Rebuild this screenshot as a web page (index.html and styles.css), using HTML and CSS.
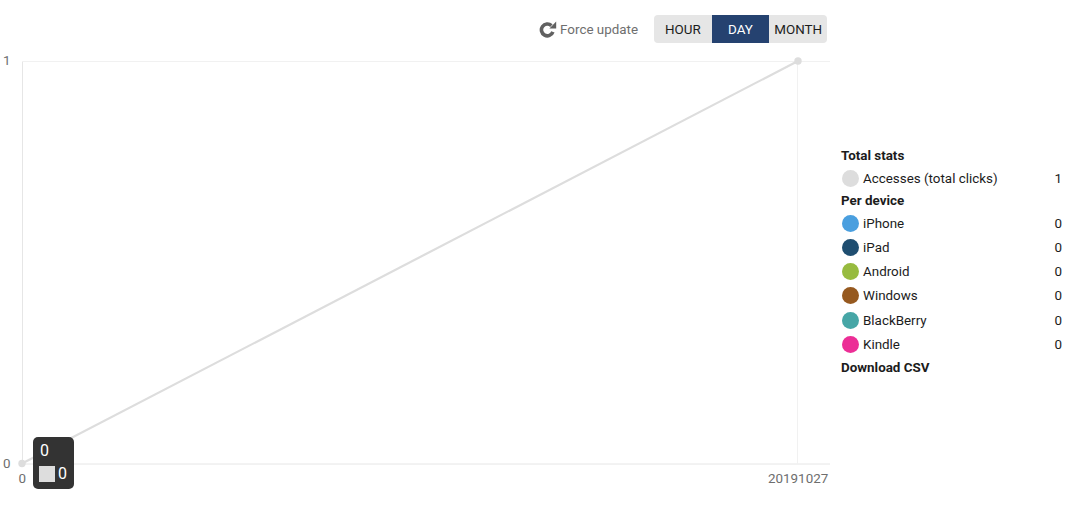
FILE: index.html
```html
<!DOCTYPE html>
<html lang="en">
<head>
<meta charset="utf-8">
<title>Stats</title>
<link rel="stylesheet" href="styles.css">
</head>
<body>
<main class="page">
  <section class="chart-col">
    <div class="toolbar">
      <a class="force">
        <svg class="force-icon" viewBox="0 0 18 18" width="18" height="18"><path d="M13.9 11.9A5.9 5.9 0 1 1 12.4 5.6" fill="none" stroke="#616161" stroke-width="3.6"/><path d="M10.4 8.6 L17.2 8.6 L17.2 1.6 Z" fill="#616161"/></svg>
        <span>Force update</span>
      </a>
      <div class="switch">
        <button class="seg">HOUR</button>
        <button class="seg active">DAY</button>
        <button class="seg">MONTH</button>
      </div>
    </div>
    <div class="chart">
      <svg class="plot" viewBox="0 0 841 460" width="841" height="460">
        <g class="grid">
          <line class="axis" x1="22.5" y1="15" x2="22.5" y2="418"/>
          <line x1="22" y1="15.5" x2="830" y2="15.5"/>
          <line class="axis" x1="22" y1="418" x2="830" y2="418"/>
          <line x1="797.5" y1="15" x2="797.5" y2="418"/>
        </g>
        <line class="series" x1="22" y1="417.5" x2="798" y2="15"/>
        <circle class="dot" cx="22" cy="417.5" r="3.7"/>
        <circle class="dot" cx="798" cy="15" r="3.7"/>
        <g class="ticks">
          <text x="3" y="19">1</text>
          <text x="3" y="422">0</text>
          <text x="18.5" y="437">0</text>
          <text x="768" y="437">20191027</text>
        </g>
      </svg>
      <div class="tip">
        <div class="tip-title">0</div>
        <div class="tip-row"><i class="tip-swatch"></i><span>0</span></div>
      </div>
    </div>
  </section>
  <aside class="legend">
    <div class="head">Total stats</div>
    <div class="row"><i class="dot-key c-total"></i><span class="name">Accesses (total clicks)</span><span class="num">1</span></div>
    <div class="head mid">Per device</div>
    <div class="row"><i class="dot-key c-iphone"></i><span class="name">iPhone</span><span class="num">0</span></div>
    <div class="row"><i class="dot-key c-ipad"></i><span class="name">iPad</span><span class="num">0</span></div>
    <div class="row"><i class="dot-key c-android"></i><span class="name">Android</span><span class="num">0</span></div>
    <div class="row"><i class="dot-key c-windows"></i><span class="name">Windows</span><span class="num">0</span></div>
    <div class="row"><i class="dot-key c-bb"></i><span class="name">BlackBerry</span><span class="num">0</span></div>
    <div class="row"><i class="dot-key c-kindle"></i><span class="name">Kindle</span><span class="num">0</span></div>
    <div class="head foot">Download CSV</div>
  </aside>
</main>
</body>
</html>
```
FILE: styles.css
```css
* { box-sizing: border-box; }
html, body { margin: 0; padding: 0; background: #fff; }
body { font-family: Roboto, "Liberation Sans", sans-serif; font-size: 13.4px; color: #1c1c1c; height: 505px; overflow: hidden; }
.page { display: flex; align-items: flex-start; }
.chart-col { width: 841px; flex: none; }
.toolbar { display: flex; justify-content: flex-end; align-items: flex-start; height: 46px; padding: 15px 14px 0 0; gap: 16px; }
.force { display: flex; align-items: center; gap: 3px; height: 28px; color: #6e6e6e; font-size: 13.4px; }
.force-icon { display: block; }
.switch { display: flex; height: 28px; border-radius: 4px; overflow: hidden; background: #e6e6e6; }
.seg { border: 0; margin: 0; padding: 0; width: 57.67px; background: transparent; font: 13.4px Roboto, sans-serif; color: #1c1c1c; }
.active { background: #254270; color: #fff; }
.chart { position: relative; }
.plot { display: block; }
.grid line { stroke: #f1f1f1; stroke-width: 1; }
.grid .axis { stroke: #e6e6e6; }
.series { stroke: #dddddd; stroke-width: 2.2; }
.dot { fill: #dddddd; }
.ticks text { font: 13.4px Roboto, sans-serif; fill: #6e6e6e; }
.tip { position: absolute; left: 33px; top: 391px; width: 41px; height: 52px; border-radius: 5px; background: #333; color: #fff; padding: 4px 6px; font-size: 16px; line-height: 19px; }
.tip-title { height: 23px; padding-left: 1px; }
.tip-row { display: flex; align-items: center; gap: 3px; }
.tip-swatch { width: 16px; height: 16px; background: #dddddd; display: block; margin-top: 1px; }
.legend { flex: none; width: 239px; padding: 146px 18px 0 0; }
.head { font-weight: 700; height: 20px; line-height: 20px; }
.mid { margin-top: 1px; }
.foot { margin-top: 2px; }
.row { display: flex; align-items: center; height: 24.2px; }
.dot-key { width: 17px; height: 17px; border-radius: 50%; margin: 0 4px 0 1px; display: block; flex: none; }
.name { flex: 1; }
.num { text-align: right; }
.c-total { background: #dddddd; }
.c-iphone { background: #4a9fdf; }
.c-ipad { background: #1f4e70; }
.c-android { background: #97bb3f; }
.c-windows { background: #96591f; }
.c-bb { background: #46a6a6; }
.c-kindle { background: #ec2e96; }
```
